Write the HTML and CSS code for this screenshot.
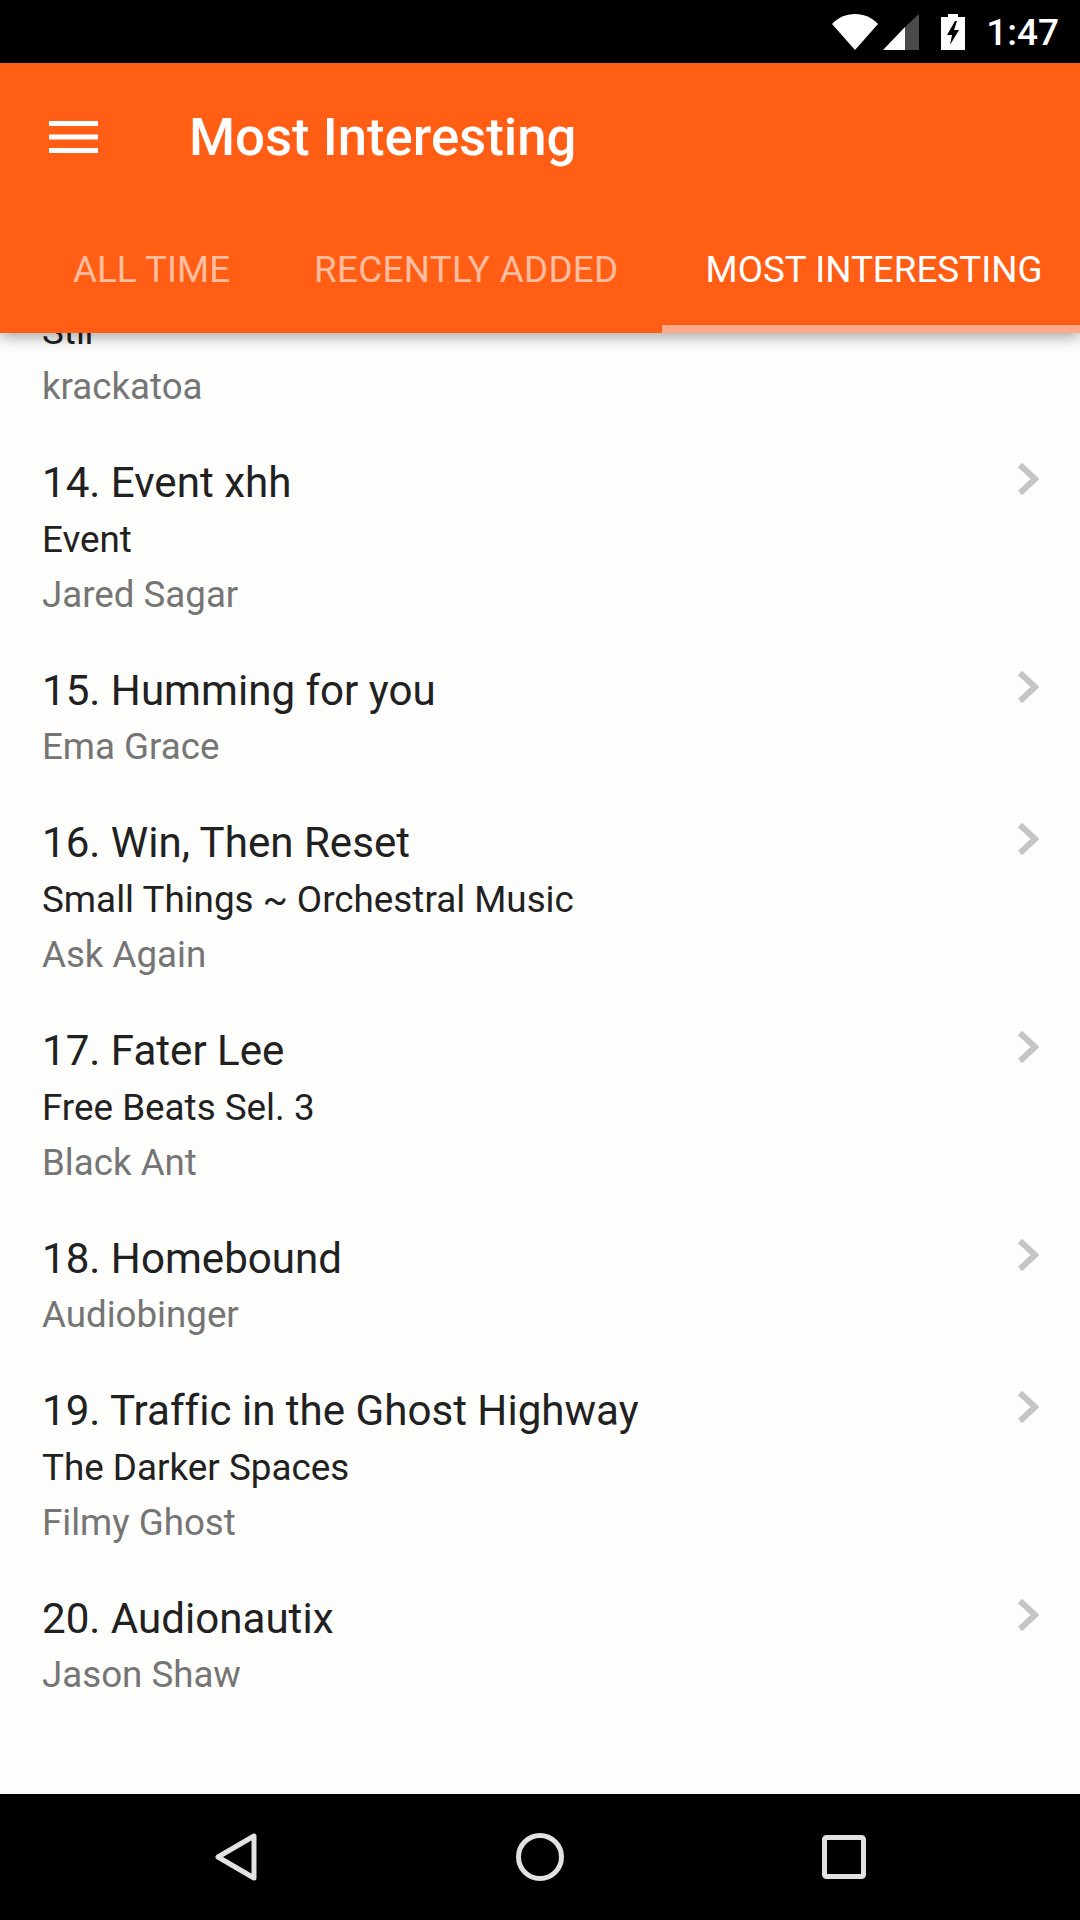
FILE: index.html
```html
<!DOCTYPE html>
<html lang="en">
<head>
    <meta charset="UTF-8">
    <meta name="viewport" content="width=device-width, initial-scale=1.0">
    <title>Most Interesting</title>
    <link rel="stylesheet" href="styles.css">
</head>
<body>
    <!-- Status bar -->
    <div class="status-bar">
        <svg class="icon-wifi" width="46" height="36" viewBox="0 0 46 36"><path d="M0 10C6 3.500 14 0 23 0s17 3.500 23 10L23 36z" fill="#fff"/></svg>
        <svg class="icon-signal" width="36" height="36" viewBox="0 0 36 36"><path d="M36 0v36H22V13z" fill="#4a4a4a"/><path d="M22 13v23H0z" fill="#fff"/></svg>
        <svg class="icon-battery" width="24" height="36" viewBox="0 0 24 36"><path d="M7 0h10v3h7v33H0V3h7z" fill="#fff"/><path d="M14 7L6 21h5l-2 10 9-15h-5l3-9z" fill="#000"/></svg>
        <span class="clock">1:47</span>
    </div>

    <!-- App bar and tabs -->
    <header class="app-bar">
        <div class="toolbar">
            <svg class="icon-menu" width="49" height="32" viewBox="0 0 49 32"><path d="M0 0h49v5H0zM0 13.500h49v5H0zM0 27h49v5H0z" fill="#fff"/></svg>
            <h1 class="toolbar-title">Most Interesting</h1>
        </div>
        <nav class="tabs">
            <a class="tab">ALL TIME</a>
            <a class="tab tab-wide">RECENTLY ADDED</a>
            <a class="tab tab-active">MOST INTERESTING</a>
        </nav>
    </header>

    <!-- Track list, scrolled so that row 13 sits under the app bar -->
    <main class="track-scroll">
        <ul class="track-list">
            <li class="track">
                <div class="track-text">
                    <div class="track-album">Stir</div>
                    <div class="track-artist">krackatoa</div>
                </div>
            </li>
            <li class="track">
                <div class="track-text">
                    <div class="track-title">14. Event xhh</div>
                    <div class="track-album">Event</div>
                    <div class="track-artist">Jared Sagar</div>
                </div>
                <svg class="chevron" width="24" height="34" viewBox="0 0 24 34"><path d="M4 3l15 14L4 31" /></svg>
            </li>
            <li class="track">
                <div class="track-text">
                    <div class="track-title">15. Humming for you</div>
                    <div class="track-artist">Ema Grace</div>
                </div>
                <svg class="chevron" width="24" height="34" viewBox="0 0 24 34"><path d="M4 3l15 14L4 31" /></svg>
            </li>
            <li class="track">
                <div class="track-text">
                    <div class="track-title">16. Win, Then Reset</div>
                    <div class="track-album">Small Things ~ Orchestral Music</div>
                    <div class="track-artist">Ask Again</div>
                </div>
                <svg class="chevron" width="24" height="34" viewBox="0 0 24 34"><path d="M4 3l15 14L4 31" /></svg>
            </li>
            <li class="track">
                <div class="track-text">
                    <div class="track-title">17. Fater Lee</div>
                    <div class="track-album">Free Beats Sel. 3</div>
                    <div class="track-artist">Black Ant</div>
                </div>
                <svg class="chevron" width="24" height="34" viewBox="0 0 24 34"><path d="M4 3l15 14L4 31" /></svg>
            </li>
            <li class="track">
                <div class="track-text">
                    <div class="track-title">18. Homebound</div>
                    <div class="track-artist">Audiobinger</div>
                </div>
                <svg class="chevron" width="24" height="34" viewBox="0 0 24 34"><path d="M4 3l15 14L4 31" /></svg>
            </li>
            <li class="track">
                <div class="track-text">
                    <div class="track-title">19. Traffic in the Ghost Highway</div>
                    <div class="track-album">The Darker Spaces</div>
                    <div class="track-artist">Filmy Ghost</div>
                </div>
                <svg class="chevron" width="24" height="34" viewBox="0 0 24 34"><path d="M4 3l15 14L4 31" /></svg>
            </li>
            <li class="track">
                <div class="track-text">
                    <div class="track-title">20. Audionautix</div>
                    <div class="track-artist">Jason Shaw</div>
                </div>
                <svg class="chevron" width="24" height="34" viewBox="0 0 24 34"><path d="M4 3l15 14L4 31" /></svg>
            </li>
        </ul>
    </main>

    <!-- Navigation bar -->
    <footer class="nav-bar">
        <svg width="42" height="48" viewBox="0 0 42 48"><path d="M39 3v42L3 24z" fill="none" stroke="#e2e2e2" stroke-width="5" stroke-linejoin="round"/></svg>
        <svg width="48" height="48" viewBox="0 0 48 48"><circle cx="24" cy="24" r="21.500" fill="none" stroke="#e2e2e2" stroke-width="5"/></svg>
        <svg width="44" height="44" viewBox="0 0 44 44"><rect x="2.500" y="2.500" width="39" height="39" rx="2" fill="none" stroke="#e2e2e2" stroke-width="5"/></svg>
    </footer>
</body>
</html>
```

FILE: styles.css
```css
/* General Styles */
* {
    box-sizing: border-box;
}

body {
    margin: 0;
    height: 1920px;
    display: flex;
    flex-direction: column;
    overflow: hidden;
    font-family: Roboto, "Liberation Sans", sans-serif;
    font-variant-ligatures: none;
    background-color: #fdfdfb;
}

/* Status bar */
.status-bar {
    height: 63px;
    flex: none;
    display: flex;
    align-items: center;
    justify-content: flex-end;
    padding: 0 21px 0 74px;
    background-color: #000;
}

.icon-wifi {
    margin-right: 5px;
}

.icon-signal {
    margin-right: 22px;
}

.icon-battery {
    margin-right: 21px;
}

.clock {
    padding-top: 3px;
    color: #fff;
    font-size: 37px;
    font-weight: 500;
    line-height: 60px;
}

/* App bar */
.app-bar {
    height: 270px;
    flex: none;
    position: relative;
    z-index: 2;
    background-color: #ff5e14;
    box-shadow: 0 4px 14px rgba(0, 0, 0, 0.35);
}

.toolbar {
    height: 148px;
    display: flex;
    align-items: center;
    padding-left: 49px;
}

.toolbar-title {
    margin: 0 0 0 91px;
    color: #fff;
    font-size: 52.700px;
    font-weight: 500;
}

.tabs {
    height: 122px;
    display: flex;
    padding-left: 31px;
}

.tab {
    padding: 0 42px;
    line-height: 118px;
    color: rgba(255, 255, 255, 0.6);
    font-size: 36.800px;
    white-space: nowrap;
}

.tab-wide {
    margin-right: 1.500px;
    letter-spacing: 0.300px;
}

.tab-active {
    flex: 1;
    padding-left: 43.500px;
    color: #fff;
    border-bottom: 8px solid #ffa988;
}

/* Track list */
.track-scroll {
    flex: 1;
    overflow: hidden;
}

.track-list {
    margin: -50px 0 0;
    padding: 0;
    list-style: none;
}

.track {
    display: flex;
    justify-content: space-between;
    align-items: flex-start;
    padding: 20px 40px 20px 42px;
}

.track-title,
.track-album,
.track-artist {
    line-height: 56px;
}

.track-title {
    color: #212121;
    font-size: 42.100px;
}

.track-album {
    margin-bottom: -1px;
    padding-top: 1px;
    color: #212121;
    font-size: 36.800px;
}

.track-artist {
    color: #757575;
    font-size: 36.700px;
}

.chevron {
    margin-top: 7px;
    fill: none;
    stroke: #c4c4c4;
    stroke-width: 6;
}

/* Navigation bar */
.nav-bar {
    height: 126px;
    flex: none;
    display: flex;
    justify-content: space-between;
    align-items: center;
    padding: 0 214px 0 215px;
    background-color: #000;
}
```
